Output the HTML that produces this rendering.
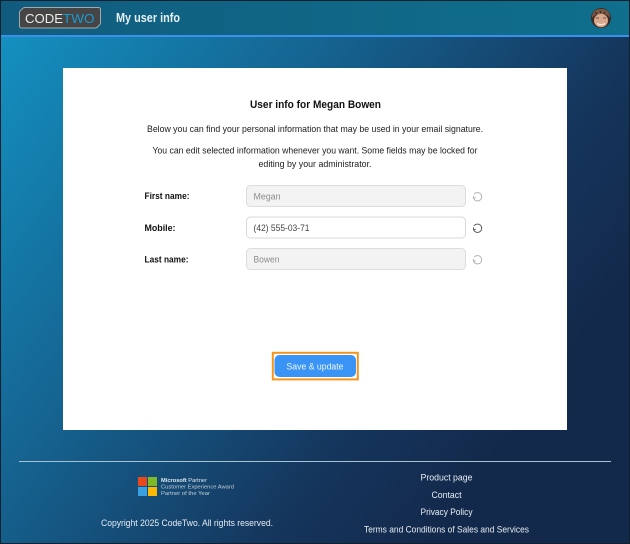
<!DOCTYPE html>
<html><head><meta charset="utf-8"><style>
html,body{margin:0;padding:0;width:630px;height:544px;overflow:hidden}
svg{display:block;font-family:"Liberation Sans",sans-serif}
</style></head><body>
<svg width="630" height="544" viewBox="0 0 630 544" xmlns="http://www.w3.org/2000/svg">
<defs>
<linearGradient id="bg" gradientUnits="userSpaceOnUse" x1="0" y1="37" x2="520" y2="420">
<stop offset="0" stop-color="#1490c0"/><stop offset="0.45" stop-color="#155f8c"/><stop offset="0.8" stop-color="#15355c"/><stop offset="1" stop-color="#13294b"/>
</linearGradient>
<linearGradient id="hd" x1="0" y1="0" x2="1" y2="0">
<stop offset="0" stop-color="#115c7e"/><stop offset="1" stop-color="#0f6f8d"/>
</linearGradient>
</defs>
<rect width="630" height="544" fill="url(#bg)"/>
<rect x="0" y="0" width="630" height="35" fill="url(#hd)"/>
<rect x="0" y="35" width="630" height="2" fill="#3a90ea"/>
<rect x="0.5" y="0.5" width="629" height="543" fill="none" stroke="#10202f" stroke-width="1"/>
<path d="M24.500 7.500H98.500Q100.500 7.500 100.500 9.500V23Q100.500 24 99.500 25L97 27.300Q96 28 95 28H21.500Q19.500 28 19.500 26V12.500Q19.500 11.500 20.500 10.500L23 8.200Q23.700 7.500 24.500 7.500Z" fill="#454545" stroke="#a3a8aa" stroke-width="1"/>
<text x="25" y="23" font-size="12.500" fill="#ececec" textLength="38" lengthAdjust="spacingAndGlyphs">CODE</text>
<text x="63" y="23" font-size="12.500" fill="#1d9ad0" textLength="31.500" lengthAdjust="spacingAndGlyphs">TWO</text>
<text x="116" y="22" font-size="13" font-weight="bold" fill="#e4f1f6" textLength="64" lengthAdjust="spacingAndGlyphs">My user info</text>

<circle cx="601" cy="18" r="10" fill="#3d2a24"/>
<path d="M592 18C592 11 596 9 601 9S610 11 610 18C608 15 605 14 601 14S594 15 592 18Z" fill="#7a5644"/>
<path d="M595 12l2 2M600 11l1 2M605 12l-1 2" stroke="#2e211c" stroke-width="1"/>
<ellipse cx="601" cy="20.500" rx="7" ry="6.700" fill="#d8a88c"/>
<path d="M597 23.500Q601 26 605 23.500" stroke="#f1e3d8" stroke-width="1.500" fill="none"/>
<path d="M596 18h3M603 18h3" stroke="#6f5040" stroke-width="1"/>

<rect x="63" y="68" width="504" height="362" fill="#fff"/>
<text x="315.500" y="108" font-size="11" font-weight="bold" fill="#111" text-anchor="middle" textLength="131" lengthAdjust="spacingAndGlyphs">User info for Megan Bowen</text>
<g font-size="9.500" fill="#1c1c1c" text-anchor="middle">
<text x="315" y="132" textLength="336" lengthAdjust="spacingAndGlyphs">Below you can find your personal information that may be used in your email signature.</text>
<text x="315" y="153.500" textLength="325" lengthAdjust="spacingAndGlyphs">You can edit selected information whenever you want. Some fields may be locked for</text>
<text x="315" y="167" textLength="113" lengthAdjust="spacingAndGlyphs">editing by your administrator.</text>
</g>

<g font-size="9.500" font-weight="bold" fill="#111">
<text x="144.500" y="199" textLength="45" lengthAdjust="spacingAndGlyphs">First name:</text>
<text x="144.500" y="231" textLength="31" lengthAdjust="spacingAndGlyphs">Mobile:</text>
<text x="144.500" y="262.500" textLength="44" lengthAdjust="spacingAndGlyphs">Last name:</text>
</g>

<rect x="246.500" y="185.500" width="219" height="21" rx="4" fill="#f3f3f3" stroke="#dcdcdc"/>
<rect x="246.500" y="217" width="219" height="21" rx="4" fill="#fff" stroke="#d8d8d8"/>
<rect x="246.500" y="248.500" width="219" height="21" rx="4" fill="#f3f3f3" stroke="#dcdcdc"/>
<text x="253.500" y="199.500" font-size="9.500" fill="#8c8c8c" textLength="27" lengthAdjust="spacingAndGlyphs">Megan</text>
<text x="253.500" y="231" font-size="9.500" fill="#444" textLength="56" lengthAdjust="spacingAndGlyphs">(42) 555-03-71</text>
<text x="253.500" y="262.500" font-size="9.500" fill="#8c8c8c" textLength="26" lengthAdjust="spacingAndGlyphs">Bowen</text>

<g fill="none" stroke-width="0.900" stroke-linecap="round">
<path d="M474.300 194A4.200 4.200 0 1 1 473.600 198.300" stroke="#b0b0b0"/><path d="M473.600 198.300L473.400 196.200M473.600 198.300L475.500 197.800" stroke="#b0b0b0"/>
<path d="M474.300 225.500A4.200 4.200 0 1 1 473.600 229.800" stroke="#555"/><path d="M473.600 229.800L473.400 227.700M473.600 229.800L475.500 229.300" stroke="#555"/>
<path d="M474.300 257A4.200 4.200 0 1 1 473.600 261.300" stroke="#b0b0b0"/><path d="M473.600 261.300L473.400 259.200M473.600 261.300L475.500 260.800" stroke="#b0b0b0"/>
</g>

<rect x="272.800" y="352.800" width="85" height="26.600" fill="#fff" stroke="#f7941d" stroke-width="2"/>
<rect x="274.500" y="355" width="81.500" height="22" rx="5" fill="#3a94f6"/>
<text x="315" y="369.500" font-size="9.500" fill="#f0f7ff" text-anchor="middle" textLength="57" lengthAdjust="spacingAndGlyphs">Save &amp; update</text>

<rect x="19" y="461" width="592" height="1" fill="#a9c2d2"/>

<rect x="138" y="477" width="9" height="9" fill="#e8481c"/>
<rect x="148" y="477" width="9" height="9" fill="#7fba2a"/>
<rect x="138" y="487" width="9" height="9" fill="#3ba0e0"/>
<rect x="148" y="487" width="9" height="9" fill="#fdb900"/>
<text x="161" y="482" font-size="5.500" fill="#e2e8ee" textLength="46" lengthAdjust="spacingAndGlyphs"><tspan font-weight="bold">Microsoft</tspan> Partner</text>
<text x="161" y="488.500" font-size="5.500" fill="#c0ccd6" textLength="73" lengthAdjust="spacingAndGlyphs">Customer Experience Award</text>
<text x="161" y="495" font-size="5.500" fill="#c0ccd6" textLength="49" lengthAdjust="spacingAndGlyphs">Partner of the Year</text>

<g font-size="9.500" fill="#e6edf3" text-anchor="middle">
<text x="187" y="526" textLength="172" lengthAdjust="spacingAndGlyphs">Copyright 2025 CodeTwo. All rights reserved.</text>
<text x="446.500" y="480.500" textLength="52" lengthAdjust="spacingAndGlyphs">Product page</text>
<text x="446.500" y="498" textLength="30" lengthAdjust="spacingAndGlyphs">Contact</text>
<text x="446.500" y="515" textLength="52" lengthAdjust="spacingAndGlyphs">Privacy Policy</text>
<text x="446.500" y="532.500" textLength="165" lengthAdjust="spacingAndGlyphs">Terms and Conditions of Sales and Services</text>
</g>
</svg>
</body></html>
